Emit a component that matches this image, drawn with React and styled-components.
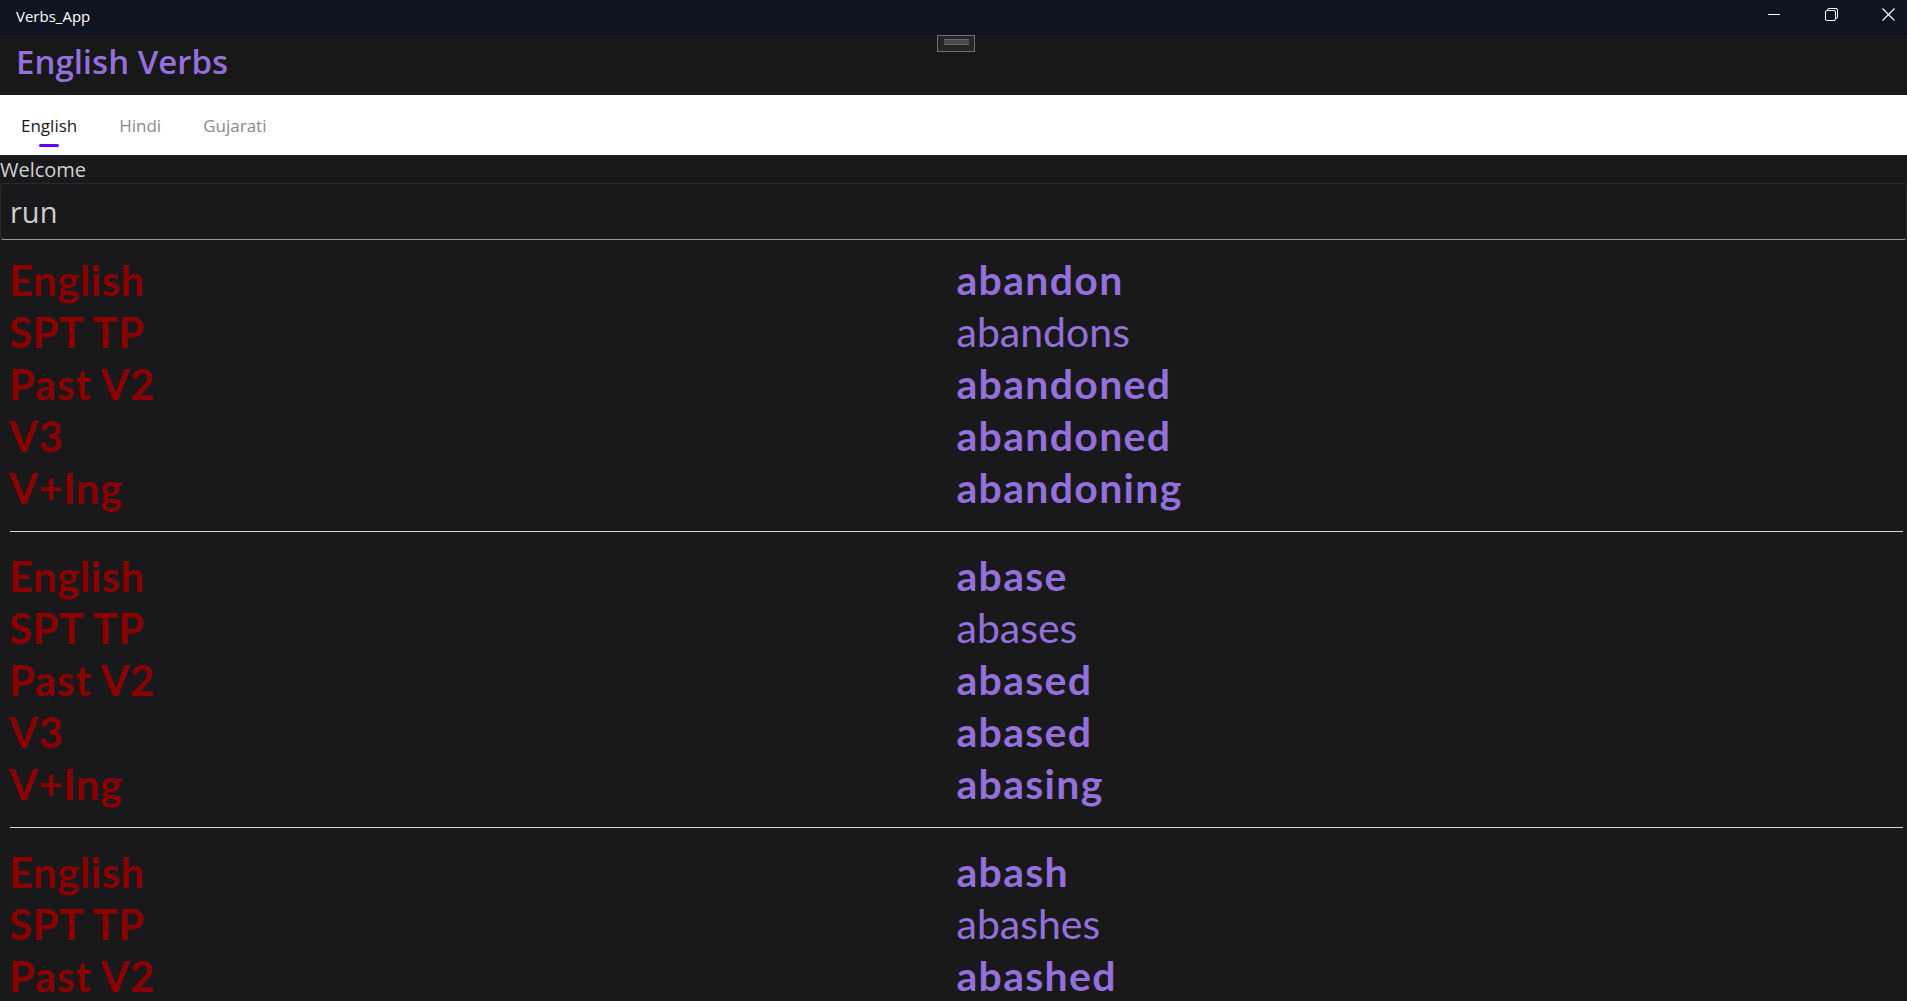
import React from "react";
import styled, { createGlobalStyle } from "styled-components";

const GlobalStyle = createGlobalStyle`
  html, body { margin: 0; padding: 0; background: #19191b; }
  * { box-sizing: border-box; }
`;

const Window = styled.div`
  height: 100vh;
  display: flex;
  flex-direction: column;
  overflow: hidden;
  background: #19191b;
  font-family: "Open Sans", "Noto Sans", sans-serif;
`;

const TitleBar = styled.div`
  height: 35px;
  flex: none;
  background: #0f1520;
  display: flex;
  justify-content: space-between;
  align-items: flex-start;
`;

const AppName = styled.div`
  padding-left: 16px;
  font-size: 15px;
  line-height: 32px;
  color: #ffffff;
`;

const Controls = styled.div`
  display: flex;
  gap: 19px;
  height: 30px;
`;

const CtrlButton = styled.div`
  width: 38px;
  height: 28px;
  display: flex;
  align-items: center;
  justify-content: center;
  color: #ffffff;
`;

const Header = styled.div`
  position: relative;
  height: 60px;
  flex: none;
  background: #181818;
  padding-left: 16px;
`;

const Title = styled.h1`
  margin: 0;
  font-size: 33px;
  font-weight: 600;
  line-height: 53px;
  color: #9370db;
`;

const DragHandle = styled.div`
  position: absolute;
  left: 937px;
  top: 0;
  width: 38px;
  height: 17px;
  border: 1px solid #6f6f6f;
  background: #252525;
  display: flex;
  align-items: center;
  justify-content: center;
  &::after {
    content: "";
    width: 25px;
    height: 4px;
    border-top: 1px solid #6a6a6a;
    border-bottom: 1px solid #6a6a6a;
    background: #4a4a4a;
    margin-top: -3px;
  }
`;

const TabBar = styled.div`
  height: 60px;
  flex: none;
  background: #ffffff;
  display: flex;
  padding: 19px 0 0 0;
`;

const Tab = styled.div`
  display: flex;
  flex-direction: column;
  align-items: center;
  padding: 0 21px;
  font-size: 17px;
  line-height: 24px;
  color: ${(p) => (p.$active ? "#1a1a1a" : "#8a8a8a")};
`;

const Indicator = styled.div`
  margin-top: 6px;
  width: 20px;
  height: 3px;
  border-radius: 2px;
  background: ${(p) => (p.$active ? "#6200ee" : "transparent")};
`;

const Welcome = styled.div`
  flex: none;
  font-size: 20px;
  line-height: 26px;
  padding-top: 2px;
  color: #d0d0d0;
`;

const SearchBox = styled.div`
  flex: none;
  height: 57px;
  border: 1px solid #2a2a2a;
  border-bottom-color: #9a9a9a;
  border-radius: 4px;
  padding-left: 9px;
  font-size: 29px;
  line-height: 55px;
  color: #cfcfcf;
`;

const List = styled.div`
  padding: 14px 4px 0 10px;
  font-family: "Lato", "Open Sans", sans-serif;
`;

const Group = styled.div``;

const Row = styled.div`
  display: grid;
  grid-template-columns: 1fr 1fr;
  font-size: 41px;
  line-height: 52px;
  height: 52px;
`;

const Label = styled.div`
  font-size: 42px;
  font-weight: 700;
  letter-spacing: 0.4px;
  color: #8b0000;
  margin-left: -1px;
`;

const Value = styled.div`
  font-weight: ${(p) => (p.$light ? 400 : 700)};
  letter-spacing: ${(p) => (p.$light ? "0" : "1.3px")};
  color: #9370db;
`;

const Separator = styled.div`
  height: 1px;
  background: #d4d4d4;
  margin: 17px 0 18px 0;
`;

const labels = ["English", "SPT TP", "Past V2", "V3", "V+Ing"];
const groups = [
  ["abandon", "abandons", "abandoned", "abandoned", "abandoning"],
  ["abase", "abases", "abased", "abased", "abasing"],
  ["abash", "abashes", "abashed", "abashed", "abashing"],
  ["abate", "abates", "abated", "abated", "abating"],
];

export default function App() {
  return (
    <>
      <GlobalStyle />
      <Window>
        <TitleBar>
          <AppName>Verbs_App</AppName>
          <Controls>
            <CtrlButton>
              <svg width="12" height="12" viewBox="0 0 12 12">
                <line x1="0" y1="6.5" x2="12" y2="6.5" stroke="currentColor" strokeWidth="1" />
              </svg>
            </CtrlButton>
            <CtrlButton>
              <svg width="13" height="13" viewBox="0 0 13 13" fill="none" stroke="currentColor" strokeWidth="1">
                <rect x="0.5" y="2.5" width="10" height="10" rx="1.5" />
                <path d="M2.5 2.5V2a1.5 1.5 0 0 1 1.5-1.5h7A1.5 1.5 0 0 1 12.5 2v7a1.5 1.5 0 0 1-1.5 1.5h-0.5" />
              </svg>
            </CtrlButton>
            <CtrlButton>
              <svg width="13" height="13" viewBox="0 0 13 13" stroke="currentColor" strokeWidth="1.1">
                <line x1="0.5" y1="0.5" x2="12.5" y2="12.5" />
                <line x1="12.5" y1="0.5" x2="0.5" y2="12.5" />
              </svg>
            </CtrlButton>
          </Controls>
        </TitleBar>
        <Header>
          <Title>English Verbs</Title>
          <DragHandle />
        </Header>
        <TabBar>
          <Tab $active>
            English
            <Indicator $active />
          </Tab>
          <Tab>
            Hindi
            <Indicator />
          </Tab>
          <Tab>
            Gujarati
            <Indicator />
          </Tab>
        </TabBar>
        <Welcome>Welcome</Welcome>
        <SearchBox>run</SearchBox>
        <List>
          {groups.map((forms, gi) => (
            <Group key={gi}>
              {forms.map((f, i) => (
                <Row key={i}>
                  <Label>{labels[i]}</Label>
                  <Value $light={i === 1}>{f}</Value>
                </Row>
              ))}
              <Separator />
            </Group>
          ))}
        </List>
      </Window>
    </>
  );
}
